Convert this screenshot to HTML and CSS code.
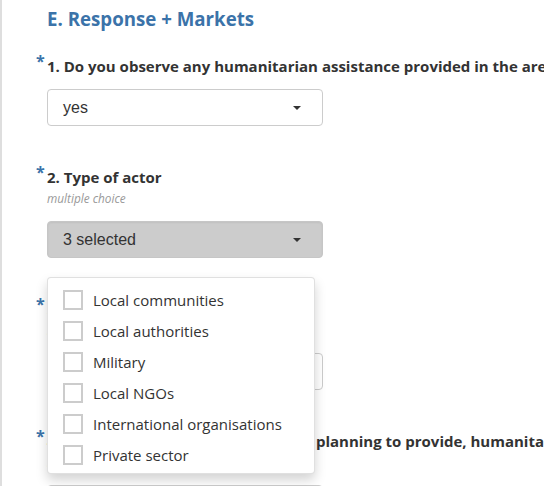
FILE: index.html
```html
<!DOCTYPE html>
<html>
<head>
<meta charset="utf-8">
<link rel="stylesheet" href="styles.css">
</head>
<body>
<div class="page">
  <h2 class="section-title">E. Response + Markets</h2>

  <div class="question q1">
    <span class="req">*</span>
    <div class="q-label">1. Do you observe any humanitarian assistance provided in the area?</div>
    <div class="select"><span>yes</span><span class="caret"></span></div>
  </div>

  <div class="question q2">
    <span class="req">*</span>
    <div class="q-label">2. Type of actor</div>
    <div class="q-hint">multiple choice</div>
    <div class="select-wrap">
      <div class="select active"><span>3 selected</span><span class="caret"></span></div>
      <ul class="menu">
        <li><span class="box"></span>Local communities</li>
        <li><span class="box"></span>Local authorities</li>
        <li><span class="box"></span>Military</li>
        <li><span class="box"></span>Local NGOs</li>
        <li><span class="box"></span>International organisations</li>
        <li><span class="box"></span>Private sector</li>
      </ul>
    </div>
  </div>

  <div class="question q3">
    <span class="req">*</span>
    <div class="q-label">3. Type of assistance provided</div>
    <div class="q-hint">multiple choice</div>
    <div class="select"><span></span><span class="caret"></span></div>
  </div>

  <div class="question q4">
    <span class="req">*</span>
    <div class="q-label">4. Are other actors providing aid, or planning to provide, humanitarian assistance?</div>
    <div class="q-hint">multiple choice</div>
    <div class="select"><span></span><span class="caret"></span></div>
  </div>
</div>
</body>
</html>
```

FILE: styles.css
```css
html, body {
  margin: 0;
  padding: 0;
  height: 100%;
  overflow: hidden;
  background: #fff;
}
.page {
  box-sizing: border-box;
  min-height: 100%;
  border-left: 2px solid #dedede;
  padding-left: 45px;
  font-family: "Open Sans", sans-serif;
  color: #333;
}
.section-title {
  margin: 0;
  padding-top: 5px;
  font-size: 18.7px;
  line-height: 28px;
  font-weight: 700;
  color: #3b73a9;
  white-space: nowrap;
}
.question {
  position: relative;
}
.q1 { margin-top: 23px; }
.q2, .q3, .q4 { margin-top: 41px; }
.req {
  position: absolute;
  left: -11px;
  top: -3px;
  color: #3b73a9;
  font-size: 16px;
  font-weight: 700;
  line-height: 16px;
}
.q-label {
  font-size: 15px;
  line-height: 20px;
  font-weight: 700;
  white-space: nowrap;
}
.q-hint {
  font-size: 11.8px;
  line-height: 14px;
  font-style: italic;
  color: #999;
  margin-top: 4px;
}
.q1 .select { margin-top: 13px; }
.select-wrap, .q3 .select, .q4 .select { margin-top: 16px; }
.select-wrap { position: relative; }
.select {
  box-sizing: border-box;
  width: 276px;
  height: 37px;
  border: 1px solid #ccc;
  border-radius: 4px;
  padding: 0 21px 0 15px;
  display: flex;
  align-items: center;
  justify-content: space-between;
  font-family: "Liberation Sans", Arial, sans-serif;
  font-size: 16px;
  color: #333;
  background: #fff;
}
.select.active {
  background: #cccccc;
  border-color: #c6c6c6;
  box-shadow: inset 0 1px 2px rgba(0,0,0,0.06);
}
.caret {
  width: 0;
  height: 0;
  border-left: 4px solid transparent;
  border-right: 4px solid transparent;
  border-top: 4px solid #333;
}
.menu {
  position: absolute;
  left: 0;
  top: 56px;
  box-sizing: border-box;
  width: 268px;
  margin: 0;
  padding: 6px 0 0 15px;
  height: 197px;
  list-style: none;
  background: #fff;
  border: 1px solid rgba(0,0,0,0.12);
  border-radius: 4px;
  box-shadow: 0 6px 12px rgba(0,0,0,0.175);
  z-index: 5;
}
.menu li {
  display: flex;
  align-items: center;
  height: 31px;
  font-size: 15px;
  color: #333;
  white-space: nowrap;
}
.box {
  box-sizing: border-box;
  width: 20px;
  height: 20px;
  border: 2px solid #cccccc;
  margin-right: 10px;
  flex: none;
}
```
